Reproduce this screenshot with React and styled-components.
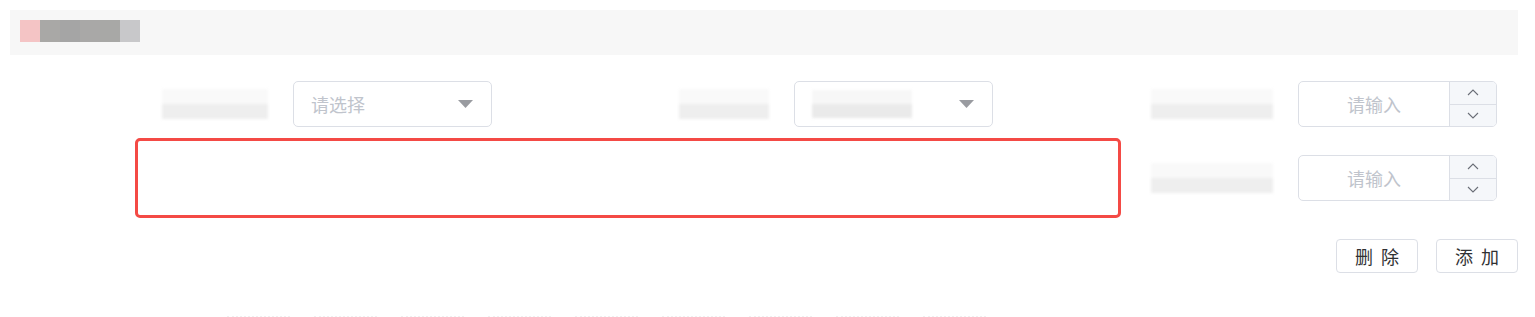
import React from 'react'
import styled, { createGlobalStyle } from 'styled-components'

const GlobalStyle = createGlobalStyle`
  body {
    margin: 0;
    background: #fff;
    font-family: "Noto Sans CJK SC", "Noto Sans", sans-serif;
  }
`

const headerCells = ['#f4c4c5', '#a9a8a6', '#a5a5a5', '#a9a8a7', '#a8a8a6', '#c8c8ca']

const Caret = () => (
  <svg width="15" height="8" viewBox="0 0 15 8">
    <path d="M0 0 L15 0 L7.5 8 Z" fill="#999ba0" />
  </svg>
)

const Chevron = ({ up }) => (
  <svg width="12" height="7" viewBox="0 0 12 7">
    <path
      d={up ? 'M1 6 L6 1 L11 6' : 'M1 1 L6 6 L11 1'}
      fill="none"
      stroke="#6b6f78"
      strokeWidth="1.1"
    />
  </svg>
)

const NumberInput = () => (
  <NumberBox>
    <NumberText>请输入</NumberText>
    <Steps>
      <Step>
        <Chevron up />
      </Step>
      <Step $bottom>
        <Chevron />
      </Step>
    </Steps>
  </NumberBox>
)

// labels are pixelated in the source, kept as soft blocks
const Label = ({ width }) => (
  <LabelBlur $w={width}>
    <LabelRow $tone="#f9f9f9" />
    <LabelRow $tone="#eeeeee" />
  </LabelBlur>
)

const App = () => {
  return (
    <Page>
      <GlobalStyle />
      <Header>
        <HeaderMosaic>
          {headerCells.map((c, i) => (
            <Cell key={i} $c={c} />
          ))}
        </HeaderMosaic>
      </Header>

      <Form>
        <Item>
          <Label width={106} />
          <Select>
            <Placeholder>请选择</Placeholder>
            <Caret />
          </Select>
        </Item>
        <Item>
          <Label width={90} />
          <Select>
            <ValueBlur />
            <Caret />
          </Select>
        </Item>
        <Item>
          <Label width={122} />
          <NumberInput />
        </Item>

        <Highlight />
        <Item>
          <Label width={122} />
          <NumberInput />
        </Item>
      </Form>

      <Actions>
        <Button>删除</Button>
        <Button>添加</Button>
      </Actions>

      <Dashes>
        {Array.from({ length: 9 }).map((_, i) => (
          <Dash key={i} />
        ))}
      </Dashes>
    </Page>
  )
}

export default App

const Page = styled.div`
  width: 1535px;
  height: 317px;
  overflow: hidden;
`

const Header = styled.div`
  margin: 10px 17px 0 10px;
  height: 45px;
  background: #f7f7f7;
  padding: 10px;
  box-sizing: border-box;
`

const HeaderMosaic = styled.div`
  display: flex;
  height: 22px;
`

const Cell = styled.div`
  width: 20px;
  height: 100%;
  background: ${(p) => p.$c};
`

const Form = styled.div`
  display: grid;
  grid-template-columns: 492px 501px 504px;
  grid-template-rows: 46px 80px;
  row-gap: 11px;
  margin-top: 26px;
`

const Item = styled.div`
  display: flex;
  justify-content: flex-end;
  align-items: center;
  gap: 25px;
`

const LabelBlur = styled.div`
  width: ${(p) => p.$w}px;
  height: 30px;
  display: flex;
  flex-direction: column;
  filter: blur(1.5px);
`

const LabelRow = styled.div`
  flex: 1;
  background: ${(p) => p.$tone};
`

const Select = styled.div`
  width: 199px;
  height: 46px;
  box-sizing: border-box;
  border: 1px solid #dcdfe6;
  border-radius: 5px;
  display: flex;
  align-items: center;
  justify-content: space-between;
  padding: 0 18px 0 17px;
`

const Placeholder = styled.span`
  font-size: 18px;
  color: #c0c4cc;
`

const ValueBlur = styled.div`
  width: 100px;
  height: 28px;
  background: linear-gradient(#f7f7f7 50%, #eaeaea 50%);
  filter: blur(1.5px);
`

const NumberBox = styled.div`
  width: 199px;
  height: 46px;
  box-sizing: border-box;
  border: 1px solid #dcdfe6;
  border-radius: 5px;
  display: flex;
  overflow: hidden;
`

const NumberText = styled.div`
  flex: 1;
  display: flex;
  align-items: center;
  justify-content: center;
  font-size: 18px;
  color: #c0c4cc;
`

const Steps = styled.div`
  width: 46px;
  display: flex;
  flex-direction: column;
  border-left: 1px solid #dcdfe6;
  background: #f5f7fa;
`

const Step = styled.div`
  flex: 1;
  display: flex;
  align-items: center;
  justify-content: center;
  border-top: ${(p) => (p.$bottom ? '1px solid #dcdfe6' : 'none')};
`

const Highlight = styled.div`
  grid-column: 1 / span 2;
  margin-left: 135px;
  width: 986px;
  height: 80px;
  box-sizing: border-box;
  border: 3px solid #f44a45;
  border-radius: 5px;
`

const Actions = styled.div`
  display: flex;
  justify-content: flex-end;
  gap: 18px;
  padding-right: 17px;
  margin-top: 21px;
`

const Button = styled.button`
  width: 82px;
  height: 34px;
  background: #fff;
  border: 1px solid #dcdfe6;
  border-radius: 4px;
  font-family: "Noto Sans CJK SC", sans-serif;
  font-size: 18px;
  letter-spacing: 8px;
  padding: 0 0 0 8px;
  color: #303133;
`

const Dashes = styled.div`
  display: flex;
  gap: 24px;
  padding-left: 227px;
  margin-top: 43px;
`

const Dash = styled.div`
  width: 63px;
  height: 3px;
  border-top: 2px dotted #f0f0f0;
`
